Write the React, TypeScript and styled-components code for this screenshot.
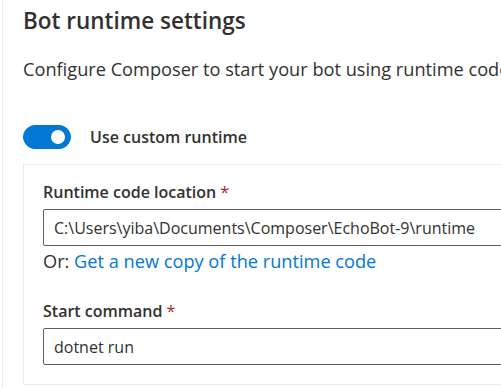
import styled, { createGlobalStyle } from "styled-components";

const GlobalStyle = createGlobalStyle`
  html, body {
    margin: 0;
    padding: 0;
    background: #ffffff;
    overflow: hidden;
  }
  body {
    font-family: "Segoe UI", "Open Sans", "Liberation Sans", Arial, sans-serif;
    color: #323130;
  }
`;

const Page = styled.div`
  margin-left: 2px;
  border-left: 1px solid #edebe9;
  padding: 5px 0 0 20px;
  width: 700px;
  height: 388px;
  box-sizing: border-box;
`;

const Title = styled.h1`
  margin: 0;
  font-size: 22.5px;
  font-weight: 600;
  line-height: 32px;
  color: #323130;
`;

const Description = styled.p`
  margin: 19px 0 0;
  font-size: 18.2px;
  line-height: 26px;
  white-space: nowrap;
`;

const ToggleRow = styled.label`
  display: flex;
  align-items: center;
  gap: 19px;
  margin-top: 43px;
  height: 24px;
`;

const Switch = styled.span<{ $on: boolean }>`
  display: flex;
  align-items: center;
  justify-content: ${(p) => (p.$on ? "flex-end" : "flex-start")};
  width: 48px;
  height: 24px;
  box-sizing: border-box;
  padding: 0 5px;
  border-radius: 12px;
  background: ${(p) => (p.$on ? "#0078d4" : "#ffffff")};
  border: 1px solid ${(p) => (p.$on ? "#0078d4" : "#605e5c")};
`;

const Knob = styled.span`
  width: 14px;
  height: 14px;
  border-radius: 50%;
  background: #ffffff;
`;

const ToggleLabel = styled.span`
  font-size: 16px;
  font-weight: 600;
`;

const Card = styled.section`
  margin-top: 15px;
  border: 1px solid #edebe9;
  padding: 14px 19px 19px;
  width: 640px;
`;

const Field = styled.div<{ $gap?: number }>`
  margin-top: ${(p) => p.$gap ?? 0}px;
`;

const Label = styled.div`
  font-size: 16px;
  font-weight: 600;
  line-height: 26px;
  padding-bottom: 4px;
`;

const Required = styled.span`
  color: #a4262c;
  margin-left: 4px;
  font-weight: 400;
`;

const Input = styled.input`
  display: block;
  width: 100%;
  height: 37px;
  box-sizing: border-box;
  border: 1px solid #605e5c;
  border-radius: 2px;
  padding: 0 10px;
  font-family: inherit;
  font-size: 16px;
  color: #323130;
  background: #ffffff;
  outline: none;
`;

const Helper = styled.div`
  font-size: 18.2px;
  line-height: 26px;
  margin-top: 2px;
`;

const Link = styled.a`
  color: #0078d4;
  text-decoration: none;
`;

export default function App() {
  return (
    <>
      <GlobalStyle />
      <Page>
        <Title>Bot runtime settings</Title>
        <Description>Configure Composer to start your bot using runtime code</Description>
        <ToggleRow>
          <Switch $on={true}>
            <Knob />
          </Switch>
          <ToggleLabel>Use custom runtime</ToggleLabel>
        </ToggleRow>
        <Card>
          <Field>
            <Label>
              Runtime code location<Required>*</Required>
            </Label>
            <Input readOnly value="C:\Users\yiba\Documents\Composer\EchoBot-9\runtime" />
            <Helper>
              Or: <Link href="#">Get a new copy of the runtime code</Link>
            </Helper>
          </Field>
          <Field $gap={24}>
            <Label>
              Start command<Required>*</Required>
            </Label>
            <Input readOnly value="dotnet run" />
          </Field>
        </Card>
      </Page>
    </>
  );
}
